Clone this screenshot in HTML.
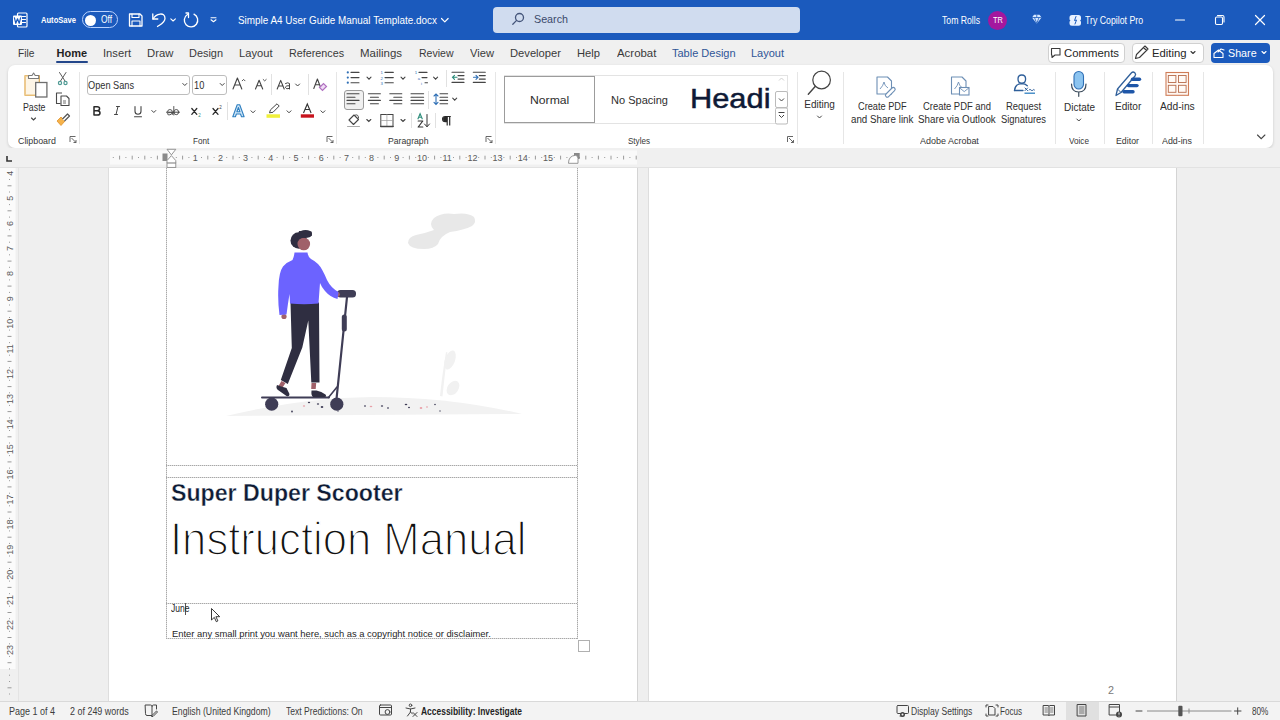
<!DOCTYPE html>
<html><head><meta charset="utf-8">
<style>
*{margin:0;padding:0;box-sizing:border-box}
html,body{width:1280px;height:720px;overflow:hidden;background:#efefef;font-family:"Liberation Sans",sans-serif}
.a{position:absolute}
.tx{position:absolute;transform-origin:0 0;white-space:nowrap;line-height:1;font-family:"Liberation Sans",sans-serif}
#title{left:0;top:0;width:1280px;height:40px;background:#1b5abd}
#tabs{left:0;top:40px;width:1280px;height:108px;background:#f0f0f0}
#ribbon{left:8px;top:65px;width:1265px;height:83px;background:#fff;border-radius:7px;box-shadow:0 1px 3px rgba(0,0,0,.16)}
#ruler{left:0;top:148px;width:1280px;height:20px;background:#f0f0f0;border-bottom:1px solid #e2e2e2}
#vruler{left:0;top:168px;width:19px;height:533px;background:#f0f0f0;border-right:1px solid #e4e4e4}
#status{left:0;top:701px;width:1280px;height:19px;background:#f3f3f3;border-top:1px solid #d9d9d9}
.page{top:168px;height:533px;background:#fff;box-shadow:-1px 0 0 #dedede,1px 0 0 #d4d4d4}
.sep{position:absolute;width:1px;background:#e6e6e6}
svg{position:absolute;overflow:visible}
</style></head><body>
<div id="title" class="a"></div>
<div id="tabs" class="a"></div>
<div id="ribbon" class="a"></div>
<div id="ruler" class="a"></div>
<div id="vruler" class="a"></div>
<div class="a page" style="left:109px;width:528px"></div>
<div class="a page" style="left:649px;width:527px"></div>
<div id="status" class="a"></div>

<!-- title bar widgets -->
<div class="a" style="left:493px;top:7px;width:307px;height:26px;background:#d0dcef;border-radius:4px"></div>
<div class="a" style="left:82px;top:11px;width:36px;height:17px;border:1.6px solid #b9d2ff;border-radius:9px"></div>
<div class="a" style="left:85px;top:14.5px;width:11px;height:11px;background:#fff;border-radius:50%"></div>
<div class="a" style="left:988px;top:10.5px;width:19px;height:19px;background:#a4179e;border-radius:50%"></div>

<!-- tab underline -->
<div class="a" style="left:56px;top:61px;width:32px;height:2px;background:#23468a;border-radius:1px"></div>
<!-- buttons -->
<div class="a" style="left:1047.5px;top:43px;width:77px;height:19.5px;background:#fff;border:1px solid #d0d0d0;border-radius:4px"></div>
<div class="a" style="left:1131.5px;top:43px;width:72px;height:19.5px;background:#fff;border:1px solid #d0d0d0;border-radius:4px"></div>
<div class="a" style="left:1210.5px;top:43px;width:59.5px;height:19.5px;background:#1b5abd;border-radius:4px"></div>

<!-- ribbon boxes -->
<div class="a" style="left:86.5px;top:74.5px;width:103px;height:20px;border:1px solid #bdbdbd;border-radius:3px"></div>
<div class="a" style="left:191.5px;top:74.5px;width:35px;height:20px;border:1px solid #bdbdbd;border-radius:3px"></div>
<div class="a" style="left:504px;top:75px;width:284px;height:49px;border:1px solid #e3e3e3"></div>
<div class="a" style="left:504px;top:76px;width:91px;height:47px;border:1.5px solid #9c9c9c"></div>
<div class="a" style="left:343.5px;top:89.5px;width:20px;height:20px;border:1px solid #9a9a9a;border-radius:3px;background:#f0f0f0"></div>

<!-- separators -->
<div class="sep" style="left:79px;top:72px;height:72px"></div>
<div class="sep" style="left:336px;top:72px;height:72px"></div>
<div class="sep" style="left:495px;top:72px;height:72px"></div>
<div class="sep" style="left:797px;top:72px;height:72px"></div>
<div class="sep" style="left:842.5px;top:72px;height:72px"></div>
<div class="sep" style="left:1055px;top:72px;height:72px"></div>
<div class="sep" style="left:1103.5px;top:72px;height:72px"></div>
<div class="sep" style="left:1151.5px;top:72px;height:72px"></div>
<div class="sep" style="left:1202.5px;top:72px;height:72px"></div>

<!-- page table borders -->
<div class="a" style="left:166px;top:168px;width:1px;height:471px;background:repeating-linear-gradient(180deg,#a8a8a8 0 1px,#dcdcdc 1px 2px)"></div>
<div class="a" style="left:577px;top:168px;width:1px;height:471px;background:repeating-linear-gradient(180deg,#a8a8a8 0 1px,#dcdcdc 1px 2px)"></div>
<div class="a" style="left:166px;top:465px;width:411px;height:1px;background:repeating-linear-gradient(90deg,#a8a8a8 0 1px,#dcdcdc 1px 2px)"></div>
<div class="a" style="left:166px;top:477px;width:411px;height:1px;background:repeating-linear-gradient(90deg,#a8a8a8 0 1px,#dcdcdc 1px 2px)"></div>
<div class="a" style="left:166px;top:603px;width:411px;height:1px;background:repeating-linear-gradient(90deg,#a8a8a8 0 1px,#dcdcdc 1px 2px)"></div>
<div class="a" style="left:166px;top:638px;width:411px;height:1px;background:repeating-linear-gradient(90deg,#a8a8a8 0 1px,#dcdcdc 1px 2px)"></div>
<div class="a" style="left:578px;top:640px;width:12px;height:12px;border:1px solid #b0b0b0"></div>

<svg width="1280" height="720" style="left:0;top:0" viewBox="0 0 1280 720" fill="none">
<rect x="110" y="150.5" width="527" height="14" fill="#f9f9f9"/>
<g font-family="Liberation Sans"><rect x="112.8" y="157" width="1" height="1" fill="#9a9a9a"/><line x1="119.6" y1="155.7" x2="119.6" y2="159.5" stroke="#9a9a9a" stroke-width="1"/><rect x="125.4" y="157" width="1" height="1" fill="#9a9a9a"/><line x1="132.2" y1="155.7" x2="132.2" y2="159.5" stroke="#9a9a9a" stroke-width="1"/><rect x="138.0" y="157" width="1" height="1" fill="#9a9a9a"/><line x1="144.8" y1="155.7" x2="144.8" y2="159.5" stroke="#9a9a9a" stroke-width="1"/><rect x="150.6" y="157" width="1" height="1" fill="#9a9a9a"/><line x1="157.4" y1="155.7" x2="157.4" y2="159.5" stroke="#9a9a9a" stroke-width="1"/><rect x="163.2" y="157" width="1" height="1" fill="#9a9a9a"/><rect x="175.8" y="157" width="1" height="1" fill="#9a9a9a"/><line x1="182.6" y1="155.7" x2="182.6" y2="159.5" stroke="#9a9a9a" stroke-width="1"/><rect x="188.4" y="157" width="1" height="1" fill="#9a9a9a"/><text x="195.2" y="160.6" font-size="9" text-anchor="middle" fill="#5a5a5a">1</text><rect x="201.0" y="157" width="1" height="1" fill="#9a9a9a"/><line x1="207.8" y1="155.7" x2="207.8" y2="159.5" stroke="#9a9a9a" stroke-width="1"/><rect x="213.6" y="157" width="1" height="1" fill="#9a9a9a"/><text x="220.4" y="160.6" font-size="9" text-anchor="middle" fill="#5a5a5a">2</text><rect x="226.2" y="157" width="1" height="1" fill="#9a9a9a"/><line x1="233.0" y1="155.7" x2="233.0" y2="159.5" stroke="#9a9a9a" stroke-width="1"/><rect x="238.8" y="157" width="1" height="1" fill="#9a9a9a"/><text x="245.6" y="160.6" font-size="9" text-anchor="middle" fill="#5a5a5a">3</text><rect x="251.4" y="157" width="1" height="1" fill="#9a9a9a"/><line x1="258.2" y1="155.7" x2="258.2" y2="159.5" stroke="#9a9a9a" stroke-width="1"/><rect x="264.0" y="157" width="1" height="1" fill="#9a9a9a"/><text x="270.8" y="160.6" font-size="9" text-anchor="middle" fill="#5a5a5a">4</text><rect x="276.6" y="157" width="1" height="1" fill="#9a9a9a"/><line x1="283.4" y1="155.7" x2="283.4" y2="159.5" stroke="#9a9a9a" stroke-width="1"/><rect x="289.2" y="157" width="1" height="1" fill="#9a9a9a"/><text x="296.0" y="160.6" font-size="9" text-anchor="middle" fill="#5a5a5a">5</text><rect x="301.8" y="157" width="1" height="1" fill="#9a9a9a"/><line x1="308.6" y1="155.7" x2="308.6" y2="159.5" stroke="#9a9a9a" stroke-width="1"/><rect x="314.4" y="157" width="1" height="1" fill="#9a9a9a"/><text x="321.2" y="160.6" font-size="9" text-anchor="middle" fill="#5a5a5a">6</text><rect x="327.0" y="157" width="1" height="1" fill="#9a9a9a"/><line x1="333.8" y1="155.7" x2="333.8" y2="159.5" stroke="#9a9a9a" stroke-width="1"/><rect x="339.6" y="157" width="1" height="1" fill="#9a9a9a"/><text x="346.4" y="160.6" font-size="9" text-anchor="middle" fill="#5a5a5a">7</text><rect x="352.2" y="157" width="1" height="1" fill="#9a9a9a"/><line x1="359.0" y1="155.7" x2="359.0" y2="159.5" stroke="#9a9a9a" stroke-width="1"/><rect x="364.8" y="157" width="1" height="1" fill="#9a9a9a"/><text x="371.6" y="160.6" font-size="9" text-anchor="middle" fill="#5a5a5a">8</text><rect x="377.4" y="157" width="1" height="1" fill="#9a9a9a"/><line x1="384.2" y1="155.7" x2="384.2" y2="159.5" stroke="#9a9a9a" stroke-width="1"/><rect x="390.0" y="157" width="1" height="1" fill="#9a9a9a"/><text x="396.8" y="160.6" font-size="9" text-anchor="middle" fill="#5a5a5a">9</text><rect x="402.6" y="157" width="1" height="1" fill="#9a9a9a"/><line x1="409.4" y1="155.7" x2="409.4" y2="159.5" stroke="#9a9a9a" stroke-width="1"/><rect x="415.2" y="157" width="1" height="1" fill="#9a9a9a"/><text x="422.0" y="160.6" font-size="9" text-anchor="middle" fill="#5a5a5a">10</text><rect x="427.8" y="157" width="1" height="1" fill="#9a9a9a"/><line x1="434.6" y1="155.7" x2="434.6" y2="159.5" stroke="#9a9a9a" stroke-width="1"/><rect x="440.4" y="157" width="1" height="1" fill="#9a9a9a"/><text x="447.2" y="160.6" font-size="9" text-anchor="middle" fill="#5a5a5a">11</text><rect x="453.0" y="157" width="1" height="1" fill="#9a9a9a"/><line x1="459.8" y1="155.7" x2="459.8" y2="159.5" stroke="#9a9a9a" stroke-width="1"/><rect x="465.6" y="157" width="1" height="1" fill="#9a9a9a"/><text x="472.4" y="160.6" font-size="9" text-anchor="middle" fill="#5a5a5a">12</text><rect x="478.2" y="157" width="1" height="1" fill="#9a9a9a"/><line x1="485.0" y1="155.7" x2="485.0" y2="159.5" stroke="#9a9a9a" stroke-width="1"/><rect x="490.8" y="157" width="1" height="1" fill="#9a9a9a"/><text x="497.6" y="160.6" font-size="9" text-anchor="middle" fill="#5a5a5a">13</text><rect x="503.4" y="157" width="1" height="1" fill="#9a9a9a"/><line x1="510.2" y1="155.7" x2="510.2" y2="159.5" stroke="#9a9a9a" stroke-width="1"/><rect x="516.0" y="157" width="1" height="1" fill="#9a9a9a"/><text x="522.8" y="160.6" font-size="9" text-anchor="middle" fill="#5a5a5a">14</text><rect x="528.6" y="157" width="1" height="1" fill="#9a9a9a"/><line x1="535.4" y1="155.7" x2="535.4" y2="159.5" stroke="#9a9a9a" stroke-width="1"/><rect x="541.2" y="157" width="1" height="1" fill="#9a9a9a"/><text x="548.0" y="160.6" font-size="9" text-anchor="middle" fill="#5a5a5a">15</text><rect x="553.8" y="157" width="1" height="1" fill="#9a9a9a"/><line x1="560.6" y1="155.7" x2="560.6" y2="159.5" stroke="#9a9a9a" stroke-width="1"/><rect x="566.4" y="157" width="1" height="1" fill="#9a9a9a"/><rect x="579.0" y="157" width="1" height="1" fill="#9a9a9a"/><line x1="585.8" y1="155.7" x2="585.8" y2="159.5" stroke="#9a9a9a" stroke-width="1"/><rect x="591.6" y="157" width="1" height="1" fill="#9a9a9a"/><line x1="598.4" y1="155.7" x2="598.4" y2="159.5" stroke="#9a9a9a" stroke-width="1"/><rect x="604.2" y="157" width="1" height="1" fill="#9a9a9a"/><line x1="611.0" y1="155.7" x2="611.0" y2="159.5" stroke="#9a9a9a" stroke-width="1"/><rect x="616.8" y="157" width="1" height="1" fill="#9a9a9a"/><line x1="623.6" y1="155.7" x2="623.6" y2="159.5" stroke="#9a9a9a" stroke-width="1"/><rect x="629.4" y="157" width="1" height="1" fill="#9a9a9a"/><line x1="636.2" y1="155.7" x2="636.2" y2="159.5" stroke="#9a9a9a" stroke-width="1"/></g>
<rect x="162.5" y="153.5" width="5" height="7.5" fill="#8a8a8a"/>
<path d="M167 149.3 h8.8 l-4.4 5.6 z" fill="#fff" stroke="#8a8a8a" stroke-width="0.9"/>
<path d="M171.4 155.6 l4.4 5 v2.5 h-8.8 v-2.5 z" fill="#fff" stroke="#8a8a8a" stroke-width="0.9"/>
<rect x="167" y="163.1" width="8.8" height="4.3" fill="#fff" stroke="#8a8a8a" stroke-width="0.9"/>
<rect x="574" y="153" width="5.7" height="6" fill="#8a8a8a"/>
<path d="M568.5 163.3 q0 -7.5 7 -8 q2.5 0.5 2.5 3 v5 z" fill="#fff" stroke="#8a8a8a" stroke-width="0.9"/>
<rect x="0" y="168" width="15.5" height="501" fill="#fbfbfb"/>
<g font-family="Liberation Sans"><text x="0" y="0" transform="translate(12.8 173.2) rotate(-90)" font-size="9" text-anchor="middle" fill="#5a5a5a">4</text><rect x="9" y="179.0" width="1" height="1" fill="#9a9a9a"/><line x1="7.5" y1="185.8" x2="11.5" y2="185.8" stroke="#9a9a9a" stroke-width="1"/><rect x="9" y="191.5" width="1" height="1" fill="#9a9a9a"/><text x="0" y="0" transform="translate(12.8 198.3) rotate(-90)" font-size="9" text-anchor="middle" fill="#5a5a5a">5</text><rect x="9" y="204.1" width="1" height="1" fill="#9a9a9a"/><line x1="7.5" y1="210.8" x2="11.5" y2="210.8" stroke="#9a9a9a" stroke-width="1"/><rect x="9" y="216.6" width="1" height="1" fill="#9a9a9a"/><text x="0" y="0" transform="translate(12.8 223.4) rotate(-90)" font-size="9" text-anchor="middle" fill="#5a5a5a">6</text><rect x="9" y="229.2" width="1" height="1" fill="#9a9a9a"/><line x1="7.5" y1="235.9" x2="11.5" y2="235.9" stroke="#9a9a9a" stroke-width="1"/><rect x="9" y="241.7" width="1" height="1" fill="#9a9a9a"/><text x="0" y="0" transform="translate(12.8 248.5) rotate(-90)" font-size="9" text-anchor="middle" fill="#5a5a5a">7</text><rect x="9" y="254.3" width="1" height="1" fill="#9a9a9a"/><line x1="7.5" y1="261.1" x2="11.5" y2="261.1" stroke="#9a9a9a" stroke-width="1"/><rect x="9" y="266.8" width="1" height="1" fill="#9a9a9a"/><text x="0" y="0" transform="translate(12.8 273.6) rotate(-90)" font-size="9" text-anchor="middle" fill="#5a5a5a">8</text><rect x="9" y="279.4" width="1" height="1" fill="#9a9a9a"/><line x1="7.5" y1="286.1" x2="11.5" y2="286.1" stroke="#9a9a9a" stroke-width="1"/><rect x="9" y="291.9" width="1" height="1" fill="#9a9a9a"/><text x="0" y="0" transform="translate(12.8 298.7) rotate(-90)" font-size="9" text-anchor="middle" fill="#5a5a5a">9</text><rect x="9" y="304.5" width="1" height="1" fill="#9a9a9a"/><line x1="7.5" y1="311.2" x2="11.5" y2="311.2" stroke="#9a9a9a" stroke-width="1"/><rect x="9" y="317.0" width="1" height="1" fill="#9a9a9a"/><text x="0" y="0" transform="translate(12.8 323.8) rotate(-90)" font-size="9" text-anchor="middle" fill="#5a5a5a">10</text><rect x="9" y="329.6" width="1" height="1" fill="#9a9a9a"/><line x1="7.5" y1="336.4" x2="11.5" y2="336.4" stroke="#9a9a9a" stroke-width="1"/><rect x="9" y="342.1" width="1" height="1" fill="#9a9a9a"/><text x="0" y="0" transform="translate(12.8 348.9) rotate(-90)" font-size="9" text-anchor="middle" fill="#5a5a5a">11</text><rect x="9" y="354.7" width="1" height="1" fill="#9a9a9a"/><line x1="7.5" y1="361.4" x2="11.5" y2="361.4" stroke="#9a9a9a" stroke-width="1"/><rect x="9" y="367.2" width="1" height="1" fill="#9a9a9a"/><text x="0" y="0" transform="translate(12.8 374.0) rotate(-90)" font-size="9" text-anchor="middle" fill="#5a5a5a">12</text><rect x="9" y="379.8" width="1" height="1" fill="#9a9a9a"/><line x1="7.5" y1="386.6" x2="11.5" y2="386.6" stroke="#9a9a9a" stroke-width="1"/><rect x="9" y="392.3" width="1" height="1" fill="#9a9a9a"/><text x="0" y="0" transform="translate(12.8 399.1) rotate(-90)" font-size="9" text-anchor="middle" fill="#5a5a5a">13</text><rect x="9" y="404.9" width="1" height="1" fill="#9a9a9a"/><line x1="7.5" y1="411.6" x2="11.5" y2="411.6" stroke="#9a9a9a" stroke-width="1"/><rect x="9" y="417.4" width="1" height="1" fill="#9a9a9a"/><text x="0" y="0" transform="translate(12.8 424.2) rotate(-90)" font-size="9" text-anchor="middle" fill="#5a5a5a">14</text><rect x="9" y="430.0" width="1" height="1" fill="#9a9a9a"/><line x1="7.5" y1="436.8" x2="11.5" y2="436.8" stroke="#9a9a9a" stroke-width="1"/><rect x="9" y="442.5" width="1" height="1" fill="#9a9a9a"/><text x="0" y="0" transform="translate(12.8 449.3) rotate(-90)" font-size="9" text-anchor="middle" fill="#5a5a5a">15</text><rect x="9" y="455.1" width="1" height="1" fill="#9a9a9a"/><line x1="7.5" y1="461.9" x2="11.5" y2="461.9" stroke="#9a9a9a" stroke-width="1"/><rect x="9" y="467.6" width="1" height="1" fill="#9a9a9a"/><text x="0" y="0" transform="translate(12.8 474.4) rotate(-90)" font-size="9" text-anchor="middle" fill="#5a5a5a">16</text><rect x="9" y="480.2" width="1" height="1" fill="#9a9a9a"/><line x1="7.5" y1="486.9" x2="11.5" y2="486.9" stroke="#9a9a9a" stroke-width="1"/><rect x="9" y="492.7" width="1" height="1" fill="#9a9a9a"/><text x="0" y="0" transform="translate(12.8 499.5) rotate(-90)" font-size="9" text-anchor="middle" fill="#5a5a5a">17</text><rect x="9" y="505.3" width="1" height="1" fill="#9a9a9a"/><line x1="7.5" y1="512.0" x2="11.5" y2="512.0" stroke="#9a9a9a" stroke-width="1"/><rect x="9" y="517.8" width="1" height="1" fill="#9a9a9a"/><text x="0" y="0" transform="translate(12.8 524.6) rotate(-90)" font-size="9" text-anchor="middle" fill="#5a5a5a">18</text><rect x="9" y="530.4" width="1" height="1" fill="#9a9a9a"/><line x1="7.5" y1="537.2" x2="11.5" y2="537.2" stroke="#9a9a9a" stroke-width="1"/><rect x="9" y="542.9" width="1" height="1" fill="#9a9a9a"/><text x="0" y="0" transform="translate(12.8 549.7) rotate(-90)" font-size="9" text-anchor="middle" fill="#5a5a5a">19</text><rect x="9" y="555.5" width="1" height="1" fill="#9a9a9a"/><line x1="7.5" y1="562.2" x2="11.5" y2="562.2" stroke="#9a9a9a" stroke-width="1"/><rect x="9" y="568.0" width="1" height="1" fill="#9a9a9a"/><text x="0" y="0" transform="translate(12.8 574.8) rotate(-90)" font-size="9" text-anchor="middle" fill="#5a5a5a">20</text><rect x="9" y="580.6" width="1" height="1" fill="#9a9a9a"/><line x1="7.5" y1="587.4" x2="11.5" y2="587.4" stroke="#9a9a9a" stroke-width="1"/><rect x="9" y="593.1" width="1" height="1" fill="#9a9a9a"/><text x="0" y="0" transform="translate(12.8 599.9) rotate(-90)" font-size="9" text-anchor="middle" fill="#5a5a5a">21</text><rect x="9" y="605.7" width="1" height="1" fill="#9a9a9a"/><line x1="7.5" y1="612.5" x2="11.5" y2="612.5" stroke="#9a9a9a" stroke-width="1"/><rect x="9" y="618.2" width="1" height="1" fill="#9a9a9a"/><text x="0" y="0" transform="translate(12.8 625.0) rotate(-90)" font-size="9" text-anchor="middle" fill="#5a5a5a">22</text><rect x="9" y="630.8" width="1" height="1" fill="#9a9a9a"/><line x1="7.5" y1="637.5" x2="11.5" y2="637.5" stroke="#9a9a9a" stroke-width="1"/><rect x="9" y="643.3" width="1" height="1" fill="#9a9a9a"/><text x="0" y="0" transform="translate(12.8 650.1) rotate(-90)" font-size="9" text-anchor="middle" fill="#5a5a5a">23</text><rect x="9" y="655.9" width="1" height="1" fill="#9a9a9a"/><line x1="7.5" y1="662.7" x2="11.5" y2="662.7" stroke="#9a9a9a" stroke-width="1"/><rect x="9" y="668.4" width="1" height="1" fill="#9a9a9a"/><rect x="9" y="674.7" width="1" height="1" fill="#9a9a9a"/><rect x="9" y="681.0" width="1" height="1" fill="#9a9a9a"/><line x1="7.5" y1="687.8" x2="11.5" y2="687.8" stroke="#9a9a9a" stroke-width="1"/><rect x="9" y="693.5" width="1" height="1" fill="#9a9a9a"/></g>
<path d="M7 156 v5 h5" stroke="#333" stroke-width="1.6"/>
</svg>
<div class="a" style="left:1065.5px;top:702px;width:33px;height:18px;background:#e0e0e0"></div>
<div id="headi" class="a" style="left:688px;top:78px;width:82px;height:40px;overflow:hidden"><div class="tx" style="left:1.5px;top:7px;font-size:27.5px;color:#0e1a36;transform:scaleX(1.12);-webkit-text-stroke:0.5px #0e1a36">Heading 1</div></div>
<svg width="1280" height="720" style="left:0;top:0" viewBox="0 0 1280 720" fill="none">
<!-- ===== TITLE BAR ===== -->
<g stroke="#fff" stroke-width="1.3" stroke-linecap="round" stroke-linejoin="round">
  <!-- word icon -->
  <rect x="17.5" y="13" width="9.5" height="14" rx="1" stroke-width="1.2"/>
  <line x1="22" y1="16.5" x2="25.5" y2="16.5" stroke-width="1.2"/><line x1="22" y1="19.5" x2="25.5" y2="19.5" stroke-width="1.2"/><line x1="22" y1="22.5" x2="25.5" y2="22.5" stroke-width="1.2"/>
  <!-- save -->
  <path d="M129.5 14 h10.5 l2 2 v10 h-12.5 z" stroke-width="1.3"/>
  <path d="M132 14 v3.5 h7 v-3.5" stroke-width="1.1"/>
  <path d="M132 26 v-5 h8 v5" stroke-width="1.1"/>
  <!-- undo -->
  <path d="M152.8 14 v5 h5" stroke-width="1.3"/>
  <path d="M153 19 C156 13.5 165 11.5 165 18.5 C165 22.5 160.5 24.5 157.5 26.5" stroke-width="1.3"/>
  <path d="M170.8 18.8 l2.3 2.2 l2.3 -2.2" stroke-width="1.1"/>
  <!-- redo -->
  <path d="M187.5 14.5 A6.7 6.7 0 1 0 194 14.2" stroke-width="1.35"/>
  <path d="M186 13 h2.5 v4.5" stroke-width="1.3"/>
  <!-- customize -->
  <path d="M211 17.8 h5 M211 19.8 l2.5 2 l2.5 -2" stroke-width="1.1"/>
  <!-- title chevron -->
  <path d="M441.5 18.5 l3.3 3.3 l3.3 -3.3" stroke-width="1.2"/>
  <!-- diamond -->
  
  <!-- minimize / restore / close -->
  <line x1="1175.5" y1="20" x2="1184.5" y2="20" stroke-width="1.1"/>
  <rect x="1215.5" y="17" width="7" height="7.5" rx="1.2" stroke-width="1.1"/>
  <path d="M1217.5 15.5 h5 a1.5 1.5 0 0 1 1.5 1.5 v5" stroke-width="1.1"/>
  <path d="M1255.5 15.5 l9 9 M1264.5 15.5 l-9 9" stroke-width="1.2"/>
</g>
<rect x="13" y="15.5" width="9" height="9.5" rx="1" fill="#fff"/>
<path d="M14.3 17.3 l1.5 6 l1.7 -4.5 l1.7 4.5 l1.5 -6" stroke="#1b5abd" stroke-width="1.2" stroke-linejoin="round"/>
<!-- search icon -->
<g stroke="#44557a" stroke-width="1.3" stroke-linecap="round"><circle cx="519.5" cy="17.5" r="4"/><line x1="516.6" y1="20.4" x2="512.8" y2="24.2"/></g>
<!-- copilot -->
<path d="M1072 15 h6.5 q2.5 0 2.5 2.5 v1.5 q0 1 -1 1.5 q1 0.5 1 1.5 v1.3 q0 2.5 -2.5 2.5 h-6.5 q-2.5 0 -2.5 -2.5 v-1.3 q0 -1 1 -1.5 q-1 -0.5 -1 -1.5 v-1.5 q0 -2.5 2.5 -2.5 z" fill="#e8f1ff"/>
<path d="M1076 16.5 l-1.5 4 l2 -0.5 l-1.5 4" stroke="#1b5abd" stroke-width="1" stroke-linecap="round"/>
<!-- diamond fill -->
<path d="M1032 17.5 l2 -2.8 h5.5 l2 2.8 l-4.75 6.3 z" fill="#d8e8ff"/>
<path d="M1032 17.5 h9.5 M1034.5 17.5 l2.25 6 l2.25 -6 M1036.75 14.7 v2.8" stroke="#1b5abd" stroke-width="0.8"/>
<!-- ===== TAB BAR BUTTONS ===== -->
<g stroke="#3a3a3a" stroke-width="1.1" stroke-linecap="round" stroke-linejoin="round">
  <path d="M1051.5 48.5 h8.5 v6.5 h-5 l-3 2.5 v-2.5 h-0.5 z"/>
  <path d="M1135.5 58.5 l1 -4 l8.5 -8.5 l3 3 l-8.5 8.5 z M1143.5 47.5 l3 3"/>
  <path d="M1191 51.5 l2 2 l2 -2"/>
</g>
<g stroke="#fff" stroke-width="1.1" stroke-linecap="round" stroke-linejoin="round">
  <path d="M1214 57.5 v-4 l4.5 -3.5 l4.5 3.5 v4 z"/>
  <path d="M1218 52 l3 -3 l3 1"/>
  <path d="M1262 51.5 l2 2 l2 -2"/>
</g>
</svg>

<svg width="1280" height="720" style="left:0;top:0" viewBox="0 0 1280 720" fill="none">
<!-- ===== CLIPBOARD ===== -->
<path d="M25.2 76 h14 v19 h-14 z" stroke="#e0a84a" stroke-width="1.6" fill="#fff"/>
<path d="M25.2 76 h14 v19 h-14 z" fill="#fbeed6" opacity="0.6"/>
<path d="M28.5 78.5 v-3 h3.5 l1.6 -2.5 l1.6 2.5 h3.5 v3 z" stroke="#7a7a7a" stroke-width="1.1" fill="#fff" stroke-linejoin="round"/>
<rect x="35.7" y="82.5" width="11.2" height="14.5" stroke="#6e6e6e" stroke-width="1.3" fill="#fff"/>
<path d="M31.5 118 l2 2 l2 -2" stroke="#444" stroke-width="1.1" stroke-linecap="round"/>
<!-- scissors -->
<g stroke="#5a5a5a" stroke-width="1" stroke-linecap="round"><path d="M59.5 72.5 L65 81 M66 72.5 L60.5 81"/></g>
<g stroke="#4f9a94" stroke-width="1.2"><circle cx="60" cy="83" r="1.6"/><circle cx="65.5" cy="83" r="1.6"/></g>
<!-- copy -->
<g stroke="#4a4a4a" stroke-width="1.1" stroke-linejoin="round">
<path d="M62 93 h-5.5 v10.5 h4"/><path d="M61 96 h5.5 l2.5 2.5 v7 h-8 z" fill="#fff"/><path d="M63 101 h3 M63 103 h3" stroke-width="0.8"/>
</g>
<!-- format painter -->
<path d="M57 121 l4 -4 l4 4 l-4 4.5 z" fill="#f5b24a" stroke="#e0902a" stroke-width="0.8"/>
<path d="M62.5 119 l5 -5 l2 2 l-5 5" stroke="#555" stroke-width="1.2" fill="#fff" stroke-linejoin="round"/>
<!-- dialog launchers -->
<g stroke="#555" stroke-width="0.9" fill="none">
<path d="M70 142 v-5.5 h5.5 M71.5 138 l4.5 4.5 M76 140 v2.5 h-2.5"/>
<path d="M327 142 v-5.5 h5.5 M328.5 138 l4.5 4.5 M333 140 v2.5 h-2.5"/>
<path d="M486 142 v-5.5 h5.5 M487.5 138 l4.5 4.5 M492 140 v2.5 h-2.5"/>
<path d="M787.5 142 v-5.5 h5.5 M789 138 l4.5 4.5 M793.5 140 v2.5 h-2.5"/>
</g>

<!-- ===== FONT ===== -->
<g stroke="#444" stroke-width="1" stroke-linecap="round" stroke-linejoin="round">
  <path d="M182.8 83.5 l2 2 l2 -2"/><path d="M220.2 83.5 l2 2 l2 -2"/>
  <!-- A^ -->
  <path d="M233 89 l4.4 -11 l4.4 11 M234.8 85 h5.2" stroke-width="1.1"/>
  <path d="M242.2 80.8 l1.4 -1.4 l1.4 1.4" stroke-width="0.9"/>
  <!-- A v -->
  <path d="M255.5 89 l3.6 -8.8 l3.6 8.8 M257 85.8 h4.2" stroke-width="1.1"/>
  <path d="M263.2 79.5 l1.5 1.4 l1.5 -1.4" stroke-width="0.9"/>
  <!-- Aa -->
  <path d="M277.2 89 l3.5 -8.6 l3.5 8.6 M278.5 86 h4.4" stroke-width="1.1"/>
  <path d="M285.5 83.5 q2.5 -1.5 4 0 v5.5 M289.5 85.8 q-4 -0.5 -4 1.8 q0.5 2 4 0.8" stroke-width="1"/>
  <path d="M295.6 84 l2 2 l2 -2"/>
  <!-- clear formatting A -->
  <path d="M313.8 88.5 l3.6 -9.5 l3.6 9.5 M315.5 84.8 h3.4" stroke-width="1.1"/>
  <!-- B I U -->
  <path d="M94 106.8 h3.2 q2.4 0 2.4 2 q0 1.7 -2.2 1.9 q2.6 0.2 2.6 2.2 q0 2.2 -2.8 2.2 h-3.2 z M94 110.7 h3.2" stroke="#2a2a2a" stroke-width="1.5"/>
  <path d="M116.5 106.5 h3 M114.5 114.5 h3 M118 106.5 l-2 8" stroke-width="1"/>
  <path d="M135 106.5 v4.8 q0 3 3 3 q3 0 3 -3 v-4.8 M134.5 116.8 h7" stroke-width="1.1"/>
  <path d="M151.8 110.5 l2 2 l2 -2"/>
  <!-- strikethrough ab -->
  <path d="M167.5 112 q0 -2.5 2.4 -2.5 q2.4 0 2.4 2.5 v2.5 M172.3 112.8 q-4.8 -0.8 -4.8 1 q0 1.5 2.4 1 q1.6 -0.4 2.4 -1.6" stroke-width="0.9"/>
  <path d="M173.8 106.5 v8.5 M173.8 112 q0 -2.5 2.4 -2.5 q2.4 0 2.4 2.6 q0 2.6 -2.4 2.6 q-2.4 0 -2.4 -2.6" stroke-width="0.9"/>
  <path d="M166.5 112.2 h13" stroke-width="1"/>
  <!-- x2 -->
  <path d="M191.8 108.5 l5 5.8 M196.8 108.5 l-5 5.8" stroke="#2a2a2a" stroke-width="1.3"/>
  <path d="M213 108.5 l5 5.8 M218 108.5 l-5 5.8" stroke="#2a2a2a" stroke-width="1.3"/>
  <path d="M251 110.8 l2 2 l2 -2"/><path d="M287 110.8 l2 2 l2 -2"/><path d="M320.9 110.8 l2 2 l2 -2"/>
</g>
<text x="198.2" y="116.5" font-family="Liberation Sans" font-size="4.5" fill="#2f8a7a">2</text>
<text x="219.3" y="108.5" font-family="Liberation Sans" font-size="4.5" fill="#444">2</text>
<!-- eraser -->
<path d="M319.5 87.5 l4 -4 l3 3 l-4 4 z" stroke="#b070c0" stroke-width="1.2" fill="#f0dcf5"/>
<!-- text effects A -->
<path d="M232.8 116.8 l4.4 -12 h2.5 l4.4 12 h-2.6 l-1 -2.8 h-4.1 l-1 2.8 z M236.9 111.8 h3 l-1.5 -4.3 z" fill="#cfe6f7" stroke="#2f7fc0" stroke-width="1.1" stroke-linejoin="round"/>
<!-- highlighter -->
<path d="M269.5 112.8 l1 -3 l6.5 -6 l2.2 2.2 l-6.2 6.3 z" stroke="#444" stroke-width="1" fill="#fff" stroke-linejoin="round"/>
<rect x="266.5" y="114.3" width="13.5" height="3.5" fill="#f0f03a"/>
<!-- font color -->
<path d="M303.5 113 l3.8 -9 l3.8 9 M305 109.5 h4.6" stroke="#333" stroke-width="1.1"/>
<rect x="300.8" y="114.3" width="13.2" height="3.4" fill="#c8141e"/>
<!-- font group inner separators -->

<g stroke="#e1e1e1" stroke-width="1"><line x1="271.5" y1="74" x2="271.5" y2="95"/><line x1="308.5" y1="74" x2="308.5" y2="95"/><line x1="227.5" y1="102" x2="227.5" y2="120"/></g>

<!-- ===== PARAGRAPH ===== -->
<g stroke="#454545" stroke-width="1.1" stroke-linecap="round">
  <path d="M351 72.4 h8 M351 77.6 h8 M351 82.7 h8"/>
  <path d="M385 72.4 h8.3 M385 77.6 h8.3 M385 82.7 h8.3"/>
  <path d="M419 72.4 h8 M422 77.6 h5 M425 82.7 h2.5"/>
  <path d="M367 77.2 l2 2 l2 -2 M401 77.2 l2 2 l2 -2 M433.6 77.2 l2 2 l2 -2"/>
  <path d="M452 72.3 h12 M458 75.6 h6 M458 79.1 h6 M452 82.4 h12"/>
  <path d="M473.3 72.3 h12 M479.3 75.6 h6 M479.3 79.1 h6 M473.3 82.4 h12"/>
  <!-- align -->
  <path d="M347 93.8 h12 M347 97.2 h8 M347 100.4 h12 M347 103.8 h8"/>
  <path d="M368.4 93.8 h12 M370.4 97.2 h8 M368.4 100.4 h12 M370.4 103.8 h8"/>
  <path d="M389.8 93.8 h12 M393.8 97.2 h8 M389.8 100.4 h12 M393.8 103.8 h8"/>
  <path d="M411 93.8 h12.6 M411 97.2 h12.6 M411 100.4 h12.6 M411 103.8 h12.6"/>
  <path d="M440 93.8 h7.6 M440 97.2 h7.6 M440 100.4 h7.6 M440 103.8 h7.6"/>
  <path d="M452.7 98.2 l2 2 l2 -2"/>
  <path d="M366.8 119.5 l2 2 l2 -2 M401 119.5 l2 2 l2 -2"/>
  <!-- borders -->
  <rect x="380.8" y="114.5" width="12.2" height="12" stroke-width="1"/>
  <path d="M386.9 114.5 v12 M380.8 120.5 h12.2" stroke-width="0.7" stroke="#999"/>
  <path d="M380.8 126.5 h12.2" stroke-width="1.5"/>
  <!-- shading bucket -->
  <path d="M349 120 l5 -5 l4.5 4.5 l-5 5 z" stroke-width="1.1" stroke-linejoin="round"/>
  <path d="M355.5 115 q3 -1 3 3" stroke-width="1"/>
  <path d="M347.5 126.5 h12" stroke="#aaa" stroke-width="1"/>
  <!-- sort Z and arrow -->
  <path d="M418.2 121 h4.6 l-4.6 6 h4.6" stroke="#333" stroke-width="1.2" stroke-linejoin="round"/>
  <path d="M427 114.5 v12 M424.5 124 l2.5 2.8 l2.5 -2.8" stroke="#333" stroke-width="1"/>
</g>
<!-- bullets dots -->
<g fill="#2f6fb5"><circle cx="347.8" cy="72.4" r="1.1"/><circle cx="347.8" cy="77.6" r="1.1"/><circle cx="347.8" cy="82.7" r="1.1"/></g>
<g font-family="Liberation Sans" font-size="4.3" fill="#2f6fb5"><text x="380.6" y="74.3">1</text><text x="380.6" y="79.5">2</text><text x="380.6" y="84.6">3</text>
<text x="414.8" y="74.3">1</text><text x="417.8" y="79.5">a</text><text x="421" y="84.6">i</text></g>
<!-- indent arrows -->
<path d="M457 77.3 h-4.5 M454.5 75.3 l-2 2 l2 2" stroke="#2b8c7a" stroke-width="1.1" stroke-linecap="round"/>
<path d="M473.5 77.3 h4.5 M476 75.3 l2 2 l-2 2" stroke="#2f6fb5" stroke-width="1.1" stroke-linecap="round"/>
<!-- line spacing arrows -->
<path d="M436 94 v10.4 M434 96 l2 -2 l2 2 M434 102.4 l2 2 l2 -2" stroke="#2f6fb5" stroke-width="1.1" stroke-linecap="round"/>
<!-- sort A -->
<path d="M417.8 119.2 l2.3 -5.5 l2.3 5.5 M418.7 117.2 h2.8" stroke="#2b8c7a" stroke-width="1.1"/>
<!-- pilcrow -->
<path d="M447.2 116.5 v9 M449.7 116.5 v9 M450.8 116.5 h-5.5 q-2.7 0 -2.7 2.6 q0 2.6 2.7 2.6 h1.9" stroke="#2a2a2a" stroke-width="1.2"/>
<path d="M445.3 116.8 q-2.4 0 -2.4 2.3 q0 2.4 2.4 2.4 h1.9 v-4.7 z" fill="#2a2a2a"/>
<g stroke="#e1e1e1" stroke-width="1"><line x1="446.5" y1="70" x2="446.5" y2="87"/><line x1="428.5" y1="91" x2="428.5" y2="109"/><line x1="411.5" y1="113" x2="411.5" y2="128"/><line x1="435.5" y1="113" x2="435.5" y2="128"/></g>

<!-- ===== STYLES scroll ===== -->
<g stroke="#bbb" stroke-width="1" fill="#fff">
  <rect x="775.5" y="91.5" width="12" height="16" rx="1.5"/>
  <rect x="775.5" y="108" width="12" height="16" rx="1.5"/>
</g>
<path d="M779 80.5 l2.5 -2.5 l2.5 2.5" stroke="#d0d0d0" stroke-width="1"/>
<path d="M779 98.5 l2.5 2.5 l2.5 -2.5" stroke="#444" stroke-width="1"/>
<path d="M778.5 112.5 h6 M779 115 l2.5 2.5 l2.5 -2.5" stroke="#444" stroke-width="1"/>

<!-- ===== EDITING ===== -->
<circle cx="821.6" cy="80" r="8.8" stroke="#444" stroke-width="1.2"/>
<path d="M815.4 86.3 L808.3 94.2" stroke="#444" stroke-width="1.4" stroke-linecap="round"/>
<path d="M817.5 116 l2 2 l2 -2" stroke="#444" stroke-width="1" stroke-linecap="round"/>

<!-- ===== ACROBAT ===== -->
<g stroke="#6d8fb5" stroke-width="1.1" stroke-linejoin="round" fill="#fff">
  <path d="M877 77 h10.5 l4 4 v13 h-14.5 z"/>
  <path d="M951.5 77 h10.5 l4 4 v13 h-14.5 z"/>
</g>
<g stroke="#6d8fb5" stroke-width="0.9" fill="none">
  <path d="M880 89 q3 -3 4 -7 q0.5 4 4 6"/>
  <path d="M954.5 89 q3 -3 4 -7 q0.5 4 4 6"/>
</g>
<path d="M886 94 l6 -6 a1.8 1.8 0 0 1 2.6 2.6 l-6 6 a1.8 1.8 0 0 1 -2.6 -2.6 z" stroke="#6d8fb5" stroke-width="1.1" fill="#fff"/>
<rect x="959.5" y="87.5" width="9.5" height="7.5" stroke="#6d8fb5" stroke-width="1.1" fill="#fff"/>
<path d="M959.5 87.8 l4.75 3.8 l4.75 -3.8" stroke="#6d8fb5" stroke-width="0.9"/>
<!-- request signatures -->
<g stroke="#2f5f9a" stroke-width="1.3" stroke-linecap="round" fill="none">
<path d="M1021.8 75 q3.8 0 3.8 4 q0 4.2 -3.8 4.2 q-3.8 0 -3.8 -4.2 q0 -4 3.8 -4 z"/>
<path d="M1014.5 90.5 q0.5 -6.5 7.3 -6.8 q3.5 0 5.5 2"/>
<path d="M1014.5 90.5 h8.5"/>
<path d="M1025 88 l2.6 2.6 M1027.6 88 l-2.6 2.6" stroke-width="1"/>
<path d="M1029 90 q1 -1.6 2 0 q1 1.6 2 0 q0.8 -1.2 1.6 0" stroke-width="0.9"/>
</g>
<path d="M1024.5 93.2 h10.5" stroke="#2f7fc0" stroke-width="1.3"/>
<!-- ===== DICTATE ===== -->
<rect x="1074" y="71.5" width="9.5" height="17.5" rx="4.75" fill="#8cc4f0" stroke="#2f6fb5" stroke-width="1.1"/>
<path d="M1071.5 84 q0 8 7.25 8 q7.25 0 7.25 -8 M1078.75 92 v4.3" stroke="#3a4a5a" stroke-width="1.2" stroke-linecap="round"/>
<path d="M1076.8 119 l2 2 l2 -2" stroke="#444" stroke-width="1" stroke-linecap="round"/>

<!-- ===== EDITOR ===== -->
<path d="M1116 95.5 L1117.5 89 L1131.5 72.8 Q1133 71.3 1134.8 72.8 Q1136.3 74.3 1135 76 L1121 92.5 Z" stroke="#2f5f9a" stroke-width="1.3" fill="#fff" stroke-linejoin="round"/>
<path d="M1117.5 89 L1121 92.5" stroke="#2f5f9a" stroke-width="1"/>
<g stroke="#1e56a8" stroke-width="3.4" stroke-linecap="round">
<line x1="1132.5" y1="79.3" x2="1139.5" y2="79.3"/>
<line x1="1128.5" y1="85.6" x2="1137" y2="85.6"/>
<line x1="1124" y1="91.8" x2="1133" y2="91.8"/>
</g>
<!-- ===== ADD-INS ===== -->
<rect x="1166" y="72.5" width="22.5" height="22.8" stroke="#cf7c57" stroke-width="1.1" fill="#fff8f3"/>
<g stroke="#b86c4c" stroke-width="0.9" fill="#fffaf6">
  <rect x="1168.3" y="75.5" width="7.6" height="7"/><rect x="1178.5" y="75.5" width="7.6" height="7"/>
  <rect x="1168.3" y="85.3" width="7.6" height="7"/><rect x="1178.5" y="85.3" width="7.6" height="7"/>
</g>
<path d="M1257.5 135 l3.7 3.7 l3.7 -3.7" stroke="#444" stroke-width="1.1" stroke-linecap="round"/>
</svg>

<svg width="1280" height="720" style="left:0;top:0" viewBox="0 0 1280 720" fill="none">
<!-- ground -->
<path d="M226 416 Q300 398 372 397 Q450 397 522 414 Z" fill="#f2f2f2"/>
<!-- cloud -->
<path d="M408 243 q0 -6 8 -8 q10 -2 18 -5 q-6 -6 0 -12 q8 -6 20 -4 q14 -2 20 3 q3 5 -2 9 q-8 4 -22 6 q-10 4 -12 12 q-4 5 -14 5 q-14 0 -16 -6 z" fill="#e8e8e8"/>
<!-- plant -->
<g fill="#f1f1f1">
<ellipse cx="450" cy="360" rx="5" ry="10" transform="rotate(20 450 360)"/>
<ellipse cx="453" cy="388" rx="5.5" ry="8" transform="rotate(35 453 388)"/>
<path d="M440 396 q2 -20 6 -44 l1.5 0.5 q-3 24 -5 44 z"/>
</g>
<!-- debris dots -->
<g fill="#3f3d56">
<ellipse cx="292" cy="411.5" rx="0.9" ry="0.9"/><ellipse cx="309" cy="402.5" rx="1.2" ry="0.8"/><ellipse cx="318" cy="404" rx="1.2" ry="0.8"/><ellipse cx="322" cy="407" rx="1.3" ry="0.9"/>
<ellipse cx="365" cy="406" rx="1" ry="0.7"/><ellipse cx="382" cy="406" rx="1.2" ry="0.8"/><ellipse cx="388" cy="408" rx="1" ry="0.7"/>
<ellipse cx="406" cy="404.5" rx="1.3" ry="0.8"/><ellipse cx="409" cy="407.5" rx="1" ry="0.7"/><ellipse cx="435" cy="404.5" rx="0.8" ry="0.8"/><ellipse cx="440" cy="411" rx="0.7" ry="0.7"/><ellipse cx="338" cy="411" rx="0.7" ry="0.7"/>
</g>
<g fill="#e8a0a8"><ellipse cx="304" cy="406" rx="1.2" ry="0.8"/><ellipse cx="371" cy="406.5" rx="1.3" ry="0.8"/><ellipse cx="421" cy="408" rx="1.3" ry="0.9"/><ellipse cx="427" cy="407" rx="0.9" ry="0.7"/></g>
<!-- scooter -->
<g stroke="#3f3d56" stroke-linecap="round">
  <line x1="262" y1="397.5" x2="329" y2="397.5" stroke-width="2"/>
  <line x1="328.5" y1="397.5" x2="337" y2="387" stroke-width="1.6"/>
  <line x1="347" y1="297" x2="336.5" y2="399" stroke-width="2.2"/>
</g>
<rect x="337" y="290" width="19" height="7.5" rx="3.5" fill="#3f3d56"/>
<rect x="341.8" y="314.5" width="5" height="17" rx="2.5" fill="#3f3d56"/>
<circle cx="271.7" cy="404.2" r="6.6" fill="#3f3d56"/>
<circle cx="336.8" cy="404.2" r="6.6" fill="#3f3d56"/>
<!-- legs / pants -->
<path d="M290.5 302.5 h28.5 l0.5 80 h-8.2 l-3 -62 l-6 27 l-14.5 36.5 l-7 -4 l11 -32 z" fill="#2f2e41"/>
<!-- ankles -->
<path d="M281.5 381 l-3 5 l4 1.5 l3 -4.5 z M311.5 383 l-0.3 6 l4.5 0 l0.5 -6 z" fill="#a0616a"/>
<!-- shoes -->
<path d="M277 385 q-1.5 3 1 5 l8.5 6 q3 1 3 -2 l-3 -6 q-4 -1 -9.5 -3 z" fill="#2f2e41"/>
<path d="M311.5 390.5 q-0.5 5 1.5 6.5 h11.5 q2.5 0 1 -2.5 q-4 -3 -9 -4 z" fill="#2f2e41"/>
<!-- hands -->
<circle cx="284" cy="316.5" r="2.6" fill="#a0616a"/>
<circle cx="337.5" cy="294.5" r="2.4" fill="#a0616a"/>
<!-- sweater -->
<path d="M294.5 252.5 L307.5 252.5 Q308 257 311 259 Q315 261 318 264 Q322 268 327 280 Q331 288 338.5 292 L337.5 299 Q330 297 325 291 Q321.5 287 320 283 L318.5 303.5 Q304 305 290 303.5 L289.5 294 Q288 303 286.5 314.5 L279.5 315 Q277.5 300 278.5 286 Q279 272 283 266.5 Q287 262 292.5 260 Q294 257 294.5 252.5 Z" fill="#6c63ff"/>
<!-- head -->
<circle cx="298.8" cy="240.5" r="8.3" fill="#2f2e41"/>
<ellipse cx="305.5" cy="233.8" rx="6.5" ry="3.8" fill="#2f2e41"/>
<circle cx="303.8" cy="244" r="6.3" fill="#a0616a"/>
<path d="M296.5 241 Q299.5 237 305.5 237.8 Q310 238 312 235.5 L311.5 231.5 L299 231 Z" fill="#2f2e41"/>
</svg>

<svg width="1280" height="720" style="left:0;top:0" viewBox="0 0 1280 720" fill="none">
<!-- status bar icons -->
<g stroke="#454545" stroke-width="1" stroke-linejoin="round" stroke-linecap="round">
  <!-- proofing book -->
  <path d="M145.5 705 h5 q1.5 0 1.5 1.5 v9 h-5 q-1.5 0 -1.5 -1.5 z M152 706.5 q0 -1.5 1.5 -1.5 h3 v4"/>
  <path d="M152 715.5 l4.5 -4.5 l1 1 l-4.5 4.5 h-1 z"/>
  <!-- text predictions icon -->
  <rect x="379.5" y="705" width="12" height="10" rx="1"/>
  <path d="M379.5 707.5 h12"/>
  <circle cx="387.5" cy="712" r="2.4"/>
  <!-- accessibility -->
  <circle cx="410.5" cy="705.3" r="1.3"/>
  <path d="M406 708 l4.5 1 l4.5 -1 M410.5 709 v3 l-3 4 M410.5 712 l2 2 M413 712.5 l4 4 M417 712.5 l-4 4"/>
  <!-- display settings -->
  <rect x="897" y="705.5" width="11.5" height="8" rx="1"/>
  <path d="M900 716 h3"/>
  <!-- focus -->
  <path d="M986 707 v-2 h2 M996 705 h2 v2 M998 714 v2 h-2 M988 716 h-2 v-2"/>
  <path d="M989 706.5 h4 l2 2 v6.5 h-6 z"/>
  <!-- read mode -->
  <path d="M1043.5 705.5 h4.8 l0.7 0.7 l0.7 -0.7 h4.8 v9.5 h-4.8 l-0.7 0.7 l-0.7 -0.7 h-4.8 z M1049 706.2 v9.2"/>
  <path d="M1045 708 h2.5 M1045 710 h2.5 M1045 712 h2.5 M1050.5 708 h2.5 M1050.5 710 h2.5 M1050.5 712 h2.5" stroke-width="0.7"/>
  <!-- print layout -->
  <rect x="1077.5" y="704.5" width="8.5" height="11.5"/>
  <path d="M1079.5 707 h4.5 M1079.5 709 h4.5 M1079.5 711 h4.5 M1079.5 713 h4.5" stroke-width="0.7"/>
  <!-- web layout -->
  <rect x="1109.5" y="704.5" width="10" height="10.5"/>
  <path d="M1109.5 707 h10"/>
  <!-- zoom -->
  <path d="M1136 711 h6 M1234.5 711 h6.5 M1237.7 707.8 v6.5"/>
</g>
<circle cx="902.5" cy="714.5" r="2.5" fill="#454545"/><circle cx="902.5" cy="714.5" r="1" fill="#f3f3f3"/>
<circle cx="1119" cy="714.5" r="3" fill="#454545"/><path d="M1119 712.5 v2.2 M1119 715.8 v0.6" stroke="#fff" stroke-width="0.9"/>
<line x1="1147" y1="711" x2="1231.5" y2="711" stroke="#8a8a8a" stroke-width="1"/>
<line x1="1189" y1="708.5" x2="1189" y2="713.5" stroke="#8a8a8a" stroke-width="1"/>
<rect x="1178.3" y="705.8" width="4.2" height="10.5" rx="1" fill="#555"/>
</svg>

<div id="cursor" class="a" style="left:184.5px;top:602.5px;width:1px;height:12px;background:#555"></div>
<svg width="1280" height="720" style="left:0;top:0"><path d="M211.5 608.5 v11.5 l2.8 -2.6 l2 4.3 l1.6 -0.8 l-2 -4.2 h3.8 z" fill="#fff" stroke="#222" stroke-width="0.9" stroke-linejoin="round"/></svg>
<div class="tx" style="left:41.0px;top:16.13px;font-size:9.30px;color:#ffffff;font-weight:bold;transform:scaleX(0.816);">AutoSave</div>
<div class="tx" style="left:101.0px;top:15.04px;font-size:10.00px;color:#ffffff;font-weight:normal;transform:scaleX(0.836);">Off</div>
<div class="tx" style="left:237.5px;top:15.03px;font-size:11.30px;color:#ffffff;font-weight:normal;transform:scaleX(0.876);">Simple A4 User Guide Manual Template.docx</div>
<div class="tx" style="left:534.0px;top:14.27px;font-size:11.50px;color:#3b4a6b;font-weight:normal;transform:scaleX(0.933);">Search</div>
<div class="tx" style="left:942.0px;top:16.34px;font-size:10.00px;color:#ffffff;font-weight:normal;transform:scaleX(0.866);">Tom Rolls</div>
<div class="tx" style="left:992.8px;top:15.68px;font-size:9.00px;color:#ffffff;font-weight:normal;transform:scaleX(0.817);">TR</div>
<div class="tx" style="left:1085.0px;top:16.14px;font-size:10.00px;color:#ffffff;font-weight:normal;transform:scaleX(0.875);">Try Copilot Pro</div>
<div class="tx" style="left:18.0px;top:48.49px;font-size:11.00px;color:#3a3a3a;font-weight:normal;transform:scaleX(0.931);">File</div>
<div class="tx" style="left:56.5px;top:48.49px;font-size:11.00px;color:#1f1f1f;font-weight:bold;">Home</div>
<div class="tx" style="left:102.7px;top:48.49px;font-size:11.00px;color:#3a3a3a;font-weight:normal;transform:scaleX(1.018);">Insert</div>
<div class="tx" style="left:146.7px;top:48.49px;font-size:11.00px;color:#3a3a3a;font-weight:normal;transform:scaleX(1.025);">Draw</div>
<div class="tx" style="left:189.0px;top:48.49px;font-size:11.00px;color:#3a3a3a;font-weight:normal;transform:scaleX(0.993);">Design</div>
<div class="tx" style="left:238.5px;top:48.49px;font-size:11.00px;color:#3a3a3a;font-weight:normal;transform:scaleX(1.014);">Layout</div>
<div class="tx" style="left:289.0px;top:48.49px;font-size:11.00px;color:#3a3a3a;font-weight:normal;transform:scaleX(0.978);">References</div>
<div class="tx" style="left:360.0px;top:48.49px;font-size:11.00px;color:#3a3a3a;font-weight:normal;transform:scaleX(1.041);">Mailings</div>
<div class="tx" style="left:418.8px;top:48.49px;font-size:11.00px;color:#3a3a3a;font-weight:normal;transform:scaleX(0.957);">Review</div>
<div class="tx" style="left:470.0px;top:48.49px;font-size:11.00px;color:#3a3a3a;font-weight:normal;transform:scaleX(1.015);">View</div>
<div class="tx" style="left:510.0px;top:48.49px;font-size:11.00px;color:#3a3a3a;font-weight:normal;transform:scaleX(1.017);">Developer</div>
<div class="tx" style="left:577.0px;top:48.49px;font-size:11.00px;color:#3a3a3a;font-weight:normal;transform:scaleX(1.017);">Help</div>
<div class="tx" style="left:616.6px;top:48.49px;font-size:11.00px;color:#3a3a3a;font-weight:normal;transform:scaleX(1.039);">Acrobat</div>
<div class="tx" style="left:672.0px;top:48.49px;font-size:11.00px;color:#2f5597;font-weight:normal;">Table Design</div>
<div class="tx" style="left:751.0px;top:48.49px;font-size:11.00px;color:#2f5597;font-weight:normal;">Layout</div>
<div class="tx" style="left:1064.0px;top:48.07px;font-size:11.50px;color:#262626;font-weight:normal;transform:scaleX(0.989);">Comments</div>
<div class="tx" style="left:1151.5px;top:48.07px;font-size:11.50px;color:#262626;font-weight:normal;transform:scaleX(0.981);">Editing</div>
<div class="tx" style="left:1228.0px;top:48.07px;font-size:11.50px;color:#ffffff;font-weight:normal;transform:scaleX(0.932);">Share</div>
<div class="tx" style="left:22.5px;top:102.73px;font-size:10.00px;color:#2e2e2e;font-weight:normal;transform:scaleX(0.880);">Paste</div>
<div class="tx" style="left:18.0px;top:136.14px;font-size:9.40px;color:#363636;font-weight:normal;transform:scaleX(0.944);">Clipboard</div>
<div class="tx" style="left:88.0px;top:80.41px;font-size:10.50px;color:#2e2e2e;font-weight:normal;transform:scaleX(0.876);">Open Sans</div>
<div class="tx" style="left:193.7px;top:80.41px;font-size:10.50px;color:#2e2e2e;font-weight:normal;transform:scaleX(0.882);">10</div>
<div class="tx" style="left:192.7px;top:136.14px;font-size:9.40px;color:#363636;font-weight:normal;transform:scaleX(0.867);">Font</div>
<div class="tx" style="left:388.4px;top:136.14px;font-size:9.40px;color:#363636;font-weight:normal;transform:scaleX(0.925);">Paragraph</div>
<div class="tx" style="left:530.0px;top:95.31px;font-size:10.50px;color:#2e2e2e;font-weight:normal;transform:scaleX(1.161);">Normal</div>
<div class="tx" style="left:611.0px;top:95.31px;font-size:10.50px;color:#2e2e2e;font-weight:normal;transform:scaleX(1.050);">No Spacing</div>
<div class="tx" style="left:628.4px;top:136.14px;font-size:9.40px;color:#363636;font-weight:normal;transform:scaleX(0.859);">Styles</div>
<div class="tx" style="left:804.3px;top:100.44px;font-size:10.00px;color:#2e2e2e;font-weight:normal;">Editing</div>
<div class="tx" style="left:857.5px;top:101.63px;font-size:10.00px;color:#2e2e2e;font-weight:normal;transform:scaleX(0.919);">Create PDF</div>
<div class="tx" style="left:851.0px;top:114.63px;font-size:10.00px;color:#2e2e2e;font-weight:normal;transform:scaleX(0.976);">and Share link</div>
<div class="tx" style="left:923.0px;top:101.63px;font-size:10.00px;color:#2e2e2e;font-weight:normal;transform:scaleX(0.941);">Create PDF and</div>
<div class="tx" style="left:918.0px;top:114.63px;font-size:10.00px;color:#2e2e2e;font-weight:normal;transform:scaleX(0.978);">Share via Outlook</div>
<div class="tx" style="left:1006.0px;top:101.63px;font-size:10.00px;color:#2e2e2e;font-weight:normal;transform:scaleX(0.940);">Request</div>
<div class="tx" style="left:1001.0px;top:114.63px;font-size:10.00px;color:#2e2e2e;font-weight:normal;transform:scaleX(0.941);">Signatures</div>
<div class="tx" style="left:919.7px;top:136.14px;font-size:9.40px;color:#363636;font-weight:normal;transform:scaleX(0.957);">Adobe Acrobat</div>
<div class="tx" style="left:1064.0px;top:102.41px;font-size:10.50px;color:#2e2e2e;font-weight:normal;transform:scaleX(0.949);">Dictate</div>
<div class="tx" style="left:1069.0px;top:136.14px;font-size:9.40px;color:#363636;font-weight:normal;transform:scaleX(0.870);">Voice</div>
<div class="tx" style="left:1114.7px;top:101.41px;font-size:10.50px;color:#2e2e2e;font-weight:normal;transform:scaleX(0.959);">Editor</div>
<div class="tx" style="left:1116.0px;top:136.14px;font-size:9.40px;color:#363636;font-weight:normal;transform:scaleX(0.937);">Editor</div>
<div class="tx" style="left:1160.0px;top:101.41px;font-size:10.50px;color:#2e2e2e;font-weight:normal;transform:scaleX(0.975);">Add-ins</div>
<div class="tx" style="left:1162.0px;top:136.14px;font-size:9.40px;color:#363636;font-weight:normal;transform:scaleX(0.941);">Add-ins</div>
<div class="tx" style="left:170.5px;top:481.61px;font-size:23.50px;color:#0e1b35;font-weight:bold;transform:scaleX(0.985);-webkit-text-stroke:0.35px #fff;">Super Duper Scooter</div>
<div class="tx" style="left:170.0px;top:515.21px;font-size:47.00px;color:#111111;font-weight:normal;transform:scaleX(0.928);-webkit-text-stroke:1.6px #fff;">Instruction Manual</div>
<div class="tx" style="left:171.0px;top:603.83px;font-size:10.00px;color:#262626;font-weight:normal;transform:scaleX(0.853);">June</div>
<div class="tx" style="left:171.5px;top:628.90px;font-size:9.80px;color:#262626;font-weight:normal;transform:scaleX(0.958);">Enter any small print you want here, such as a copyright notice or disclaimer.</div>
<div class="tx" style="left:1108.0px;top:685.53px;font-size:10.00px;color:#7a7a7a;font-weight:normal;transform:scaleX(1.079);">2</div>
<div class="tx" style="left:9.4px;top:706.53px;font-size:10.00px;color:#3c3c3c;font-weight:normal;transform:scaleX(0.899);">Page 1 of 4</div>
<div class="tx" style="left:70.3px;top:706.53px;font-size:10.00px;color:#3c3c3c;font-weight:normal;transform:scaleX(0.895);">2 of 249 words</div>
<div class="tx" style="left:172.0px;top:706.53px;font-size:10.00px;color:#3c3c3c;font-weight:normal;transform:scaleX(0.870);">English (United Kingdom)</div>
<div class="tx" style="left:286.0px;top:706.53px;font-size:10.00px;color:#3c3c3c;font-weight:normal;transform:scaleX(0.856);">Text Predictions: On</div>
<div class="tx" style="left:421.0px;top:706.53px;font-size:10.00px;color:#1f1f1f;font-weight:bold;transform:scaleX(0.845);">Accessibility: Investigate</div>
<div class="tx" style="left:910.6px;top:706.53px;font-size:10.00px;color:#3c3c3c;font-weight:normal;transform:scaleX(0.856);">Display Settings</div>
<div class="tx" style="left:1000.0px;top:706.53px;font-size:10.00px;color:#3c3c3c;font-weight:normal;transform:scaleX(0.808);">Focus</div>
<div class="tx" style="left:1252.0px;top:706.53px;font-size:10.00px;color:#3c3c3c;font-weight:normal;transform:scaleX(0.819);">80%</div>
</body></html>
